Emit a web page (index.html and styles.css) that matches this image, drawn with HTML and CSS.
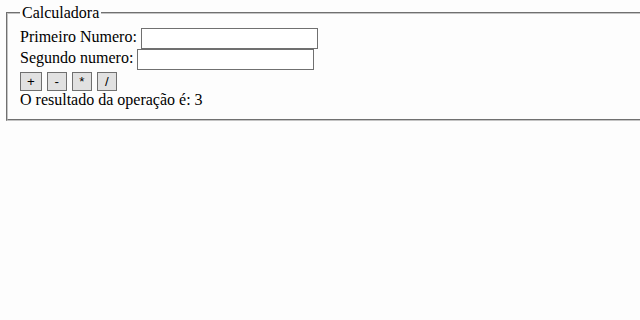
FILE: index.html
```html
<!DOCTYPE html>
<html>
<head>
<meta charset="utf-8">
<link rel="stylesheet" href="styles.css">
</head>
<body class="page">
<fieldset class="calc">
<legend class="calc-legend">Calculadora</legend>
<div class="row">Primeiro Numero: <input class="num" type="text"></div>
<div class="row">Segundo numero: <input class="num" type="text"></div>
<div class="row btns"><button class="op">+</button><button class="op">-</button><button class="op">*</button><button class="op">/</button></div>
<div class="row">O resultado da operação é: 3</div>
</fieldset>
</body>
</html>
```
FILE: styles.css
```css
html {
  background: #fdfdfd;
}
.page {
  margin: 4px 0 4px 4px;
  font-family: "Liberation Serif", "Times New Roman", serif;
  font-size: 16px;
  color: #000;
}
.calc {
  margin: 0 0 0 2px;
  padding: 0.35em 0.75em 0.625em;
  border: 2px groove #c4c4c4;
  border-right: none;
}
.calc-legend {
  padding: 0 2px;
}
.row {
  line-height: normal;
}
.num {
  font-family: "Liberation Sans", Arial, sans-serif;
  font-size: 13.33px;
  width: 171px;
  height: 17px;
  padding: 1px 2px;
  border: 1px solid #707070;
  background: #fff;
  margin: 0;
  vertical-align: middle;
}
.btns {
  display: flex;
  gap: 5px;
  margin-top: 2px;
  height: 19px;
}
.op {
  font-family: "Liberation Sans", Arial, sans-serif;
  font-size: 13.33px;
  height: 19px;
  min-width: 20px;
  padding: 0 6px;
  border: 1px solid #707070;
  background: #e1e1e1;
  margin: 0;
}
```
